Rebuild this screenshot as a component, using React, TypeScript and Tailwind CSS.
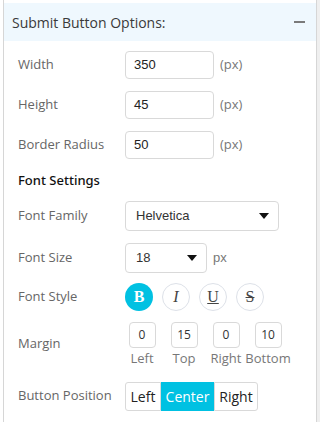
import React from 'react';

const sans = "font-['Open_Sans',sans-serif]";
const arial = "font-['Liberation_Sans',Arial,sans-serif]";
const serif = "font-['Liberation_Serif',serif]";

function Caret() {
  return (
    <svg width="10" height="6" viewBox="0 0 10 6" className="shrink-0">
      <path d="M0 0 H10 L5 6 Z" fill="#111" />
    </svg>
  );
}

function Label({ children }: { children: React.ReactNode }) {
  return <div className={`w-[107px] shrink-0 text-[13px] text-[#666] ${sans}`}>{children}</div>;
}

function NumberRow({ label, value, top }: { label: string; value: string; top: string }) {
  return (
    <div className={`flex items-center ${top}`}>
      <Label>{label}</Label>
      <div className={`flex h-[28px] w-[89px] items-center rounded-[4px] border border-[#d9d9d9] px-[8px] text-[13px] text-[#222] ${arial}`}>
        {value}
      </div>
      <span className={`ml-[6px] text-[13px] text-[#777] ${sans}`}>(px)</span>
    </div>
  );
}

export default function App() {
  const styles = [
    { key: 'b', text: 'B', cls: 'font-bold' },
    { key: 'i', text: 'I', cls: 'italic' },
    { key: 'u', text: 'U', cls: 'underline' },
    { key: 's', text: 'S', cls: 'line-through' },
  ];
  const margins = [
    ['0', 'Left'],
    ['15', 'Top'],
    ['0', 'Right'],
    ['10', 'Bottom'],
  ];

  return (
    <div className="flex h-[422px] w-[320px] overflow-hidden bg-white">
      <div className="ml-[3px] flex h-full w-[314px] flex-col border-x border-[#d6d6d6] pt-[3px]">
        {/* Header */}
        <div className="flex h-[38px] items-center justify-between bg-[#eff8fe] pl-[8px] pr-[11px]">
          <span className={`text-[14px] text-[#3a3a3a] ${sans}`}>Submit Button Options:</span>
          <span className="block h-[2px] w-[11px] bg-[#7a7a7a]" />
        </div>

        <div className="flex flex-col pl-[14px]">
          <NumberRow label="Width" value="350" top="mt-[10px]" />
          <NumberRow label="Height" value="45" top="mt-[12px]" />
          <NumberRow label="Border Radius" value="50" top="mt-[12px]" />

          <div className="mt-[12px] font-['Noto_Sans',sans-serif] text-[13px] font-medium text-[#111]">Font Settings</div>

          {/* Font family */}
          <div className="mt-[10px] flex items-center">
            <Label>Font Family</Label>
            <div className={`flex h-[30px] w-[154px] items-center justify-between rounded-[4px] border border-[#d9d9d9] pl-[10px] pr-[9px] text-[13px] text-[#333] ${arial}`}>
              <span>Helvetica</span>
              <Caret />
            </div>
          </div>

          {/* Font size */}
          <div className="mt-[12px] flex items-center">
            <Label>Font Size</Label>
            <div className={`flex h-[30px] w-[82px] items-center justify-between rounded-[4px] border border-[#d9d9d9] pl-[10px] pr-[9px] text-[13px] text-[#333] ${arial}`}>
              <span>18</span>
              <Caret />
            </div>
            <span className={`ml-[6px] text-[13px] text-[#777] ${arial}`}>px</span>
          </div>

          {/* Font style */}
          <div className="mt-[10px] flex items-center">
            <Label>Font Style</Label>
            <div className="flex gap-[9px]">
              {styles.map((s, i) => (
                <div
                  key={s.key}
                  className={`flex h-[28px] w-[28px] items-center justify-center rounded-full text-[16px] ${serif} ${
                    i === 0 ? 'bg-[#00c1e2] text-white' : 'border border-[#dde1e8] text-[#444]'
                  }`}
                >
                  <span className={s.cls}>{s.text}</span>
                </div>
              ))}
            </div>
          </div>

          {/* Margin */}
          <div className="mt-[11px] flex items-center">
            <div className={`w-[103px] shrink-0 text-[13px] text-[#666] ${sans}`}>Margin</div>
            <div className="flex">
              {margins.map(([v, l]) => (
                <div key={l} className="flex w-[42px] flex-col items-center">
                  <div className={`flex h-[26px] w-[27px] items-center justify-center rounded-[4px] border border-[#d9d9d9] text-[12px] text-[#333] ${sans}`}>
                    {v}
                  </div>
                  <div className={`mt-[1px] text-[13px] leading-[18px] text-[#777] ${sans}`}>{l}</div>
                </div>
              ))}
            </div>
          </div>

          {/* Button position */}
          <div className="mt-[15px] flex items-center">
            <Label>Button Position</Label>
            <div className={`flex h-[29px] text-[14px] ${sans}`}>
              <div className="flex w-[36px] items-center justify-center rounded-l-[3px] border border-[#d9d9d9] text-[#222]">Left</div>
              <div className="flex w-[53px] items-center justify-center bg-[#00c1e2] text-white">Center</div>
              <div className="flex w-[44px] items-center justify-center rounded-r-[3px] border border-[#d9d9d9] text-[#222]">Right</div>
            </div>
          </div>
        </div>
      </div>
      <div className="h-full w-[3px] bg-[#efefef]" />
    </div>
  );
}
